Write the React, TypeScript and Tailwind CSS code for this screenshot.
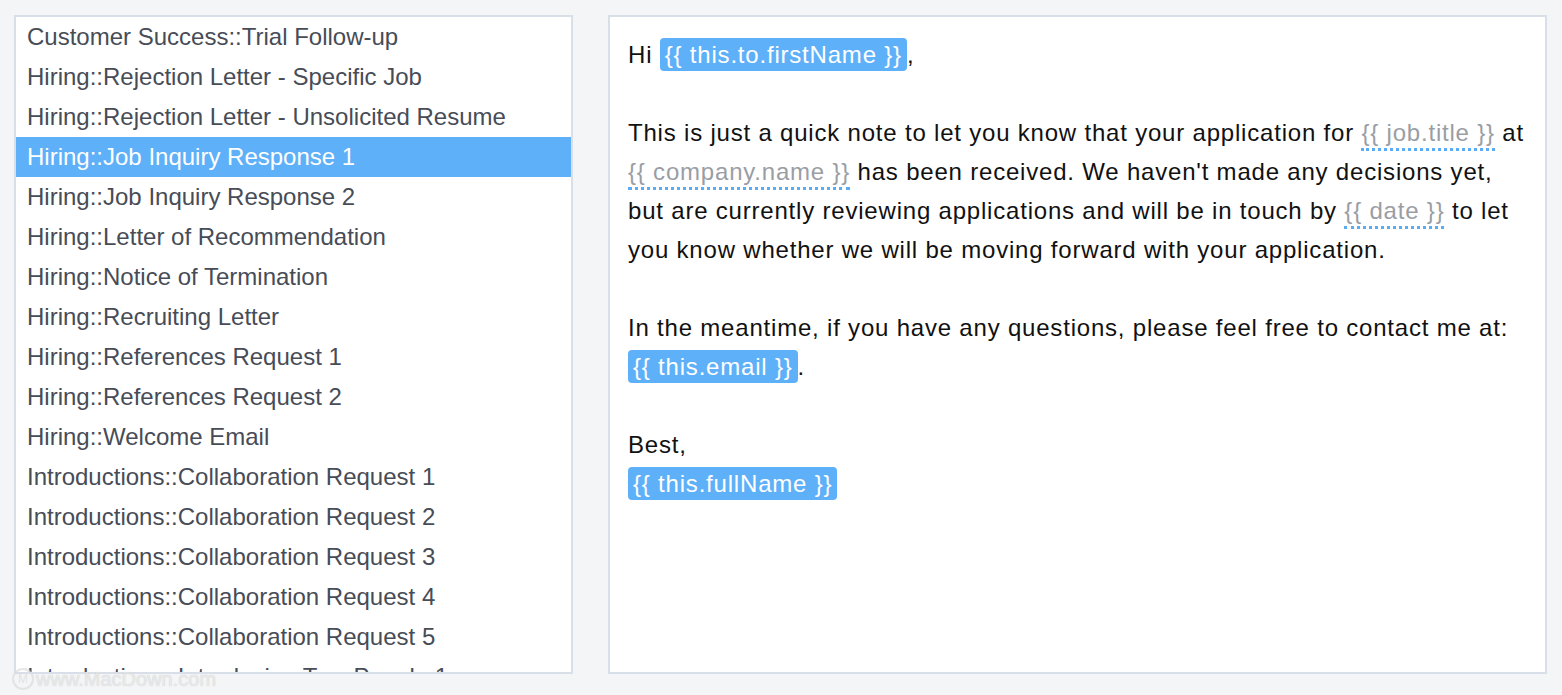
const templates = [
  "Customer Success::Trial Follow-up",
  "Hiring::Rejection Letter - Specific Job",
  "Hiring::Rejection Letter - Unsolicited Resume",
  "Hiring::Job Inquiry Response 1",
  "Hiring::Job Inquiry Response 2",
  "Hiring::Letter of Recommendation",
  "Hiring::Notice of Termination",
  "Hiring::Recruiting Letter",
  "Hiring::References Request 1",
  "Hiring::References Request 2",
  "Hiring::Welcome Email",
  "Introductions::Collaboration Request 1",
  "Introductions::Collaboration Request 2",
  "Introductions::Collaboration Request 3",
  "Introductions::Collaboration Request 4",
  "Introductions::Collaboration Request 5",
  "Introductions::Introducing Two People 1",
];

const Pill = ({ children }: { children: React.ReactNode }) => (
  <span className="bg-[#5eb0f8] text-white rounded-[4px] px-[5px] py-[3px] whitespace-nowrap">{children}</span>
);

const Field = ({ children }: { children: React.ReactNode }) => (
  <span className="text-[#9a9ea4] border-b-[3px] border-dotted border-[#5aacf4] pb-[2px] whitespace-nowrap">
    {children}
  </span>
);

const App = () => {
  const selected = 3;

  return (
    <div
      className="relative w-[1562px] h-[695px] bg-[#f4f5f7] flex gap-[35px] pt-[15px] pl-[14px] overflow-hidden"
      style={{ fontFamily: '"Liberation Sans", Arial, sans-serif' }}
    >
      <div className="w-[559px] h-[659px] border-2 border-[#d8dfe9] bg-white overflow-hidden">
        {templates.map((t, i) => (
          <div
            key={t}
            className={`h-[40px] flex items-center pl-[11px] text-[24px] whitespace-nowrap ${
              i === selected ? "bg-[#5eb0f8] text-white" : "text-[#474c57]"
            }`}
          >
            {t}
          </div>
        ))}
      </div>

      <div className="w-[939px] h-[659px] border-2 border-[#d8dfe9] bg-white pt-[18px] pl-[18px] pr-[10px] text-[24px] leading-[39px] tracking-[0.8px] text-[#111]">
        <p>
          Hi <Pill>{"{{ this.to.firstName }}"}</Pill>,
        </p>
        <p className="mt-[39px]">
          This is just a quick note to let you know that your application for <Field>{"{{ job.title }}"}</Field> at{" "}
          <Field>{"{{ company.name }}"}</Field> has been received. We haven't made any decisions yet, but are currently
          reviewing applications and will be in touch by <Field>{"{{ date }}"}</Field> to let you know whether we will
          be moving forward with your application.
        </p>
        <p className="mt-[39px]">
          In the meantime, if you have any questions, please feel free to contact me at:{" "}
          <Pill>{"{{ this.email }}"}</Pill>.
        </p>
        <p className="mt-[39px]">Best,</p>
        <p>
          <Pill>{"{{ this.fullName }}"}</Pill>
        </p>
      </div>

      <div className="absolute left-[12px] top-[664px] flex items-center gap-[2px] text-[20px] opacity-70">
        <span className="w-[22px] h-[22px] rounded-full border-2 border-[#dcdcdc] text-[12px] leading-[18px] text-center text-[#dcdcdc]">
          M
        </span>
        <span className="text-[#e4e4e4] [text-shadow:0_0_1px_#bbb]">www.MacDown.com</span>
      </div>
    </div>
  );
};

export default App;
